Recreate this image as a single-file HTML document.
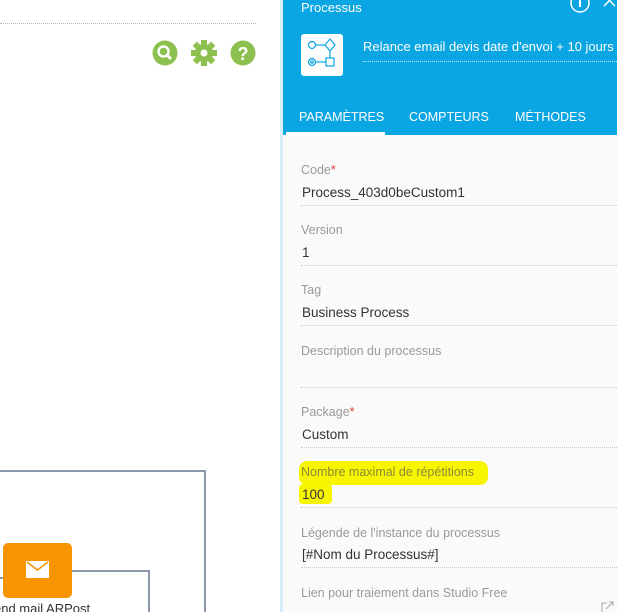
<!DOCTYPE html>
<html><head><meta charset="utf-8"><style>
html,body{margin:0;width:617px;height:612px;overflow:hidden}
body{background:#fff;font-family:"Liberation Sans",sans-serif;position:relative}
.a{position:absolute}
.lbl{position:absolute;left:301px;font-size:12.5px;color:#9a9a9a}
.val{position:absolute;left:302px;font-size:13.5px;color:#333}
.ln{position:absolute;left:301px;right:0;border-top:1px dotted #c8c8c8}
.star{color:#e04040}
</style></head><body>
<div class="a" style="left:0;top:23px;width:256px;border-top:1px dotted #b8b8b8"></div>
<svg class="a" style="left:152px;top:40px" width="105" height="28">
<circle cx="13" cy="13" r="12.5" fill="#8dc14f"/><circle cx="11.5" cy="11.5" r="5" fill="none" stroke="#fff" stroke-width="2.4"/><line x1="15" y1="15" x2="19" y2="19" stroke="#fff" stroke-width="2.8"/>
<g transform="translate(52,13)" fill="#8dc14f"><circle r="9"/><rect x="-3" y="-13" width="6" height="26"/><rect x="-13" y="-3" width="26" height="6"/><rect x="-3" y="-13" width="6" height="26" transform="rotate(45)"/><rect x="-3" y="-13" width="6" height="26" transform="rotate(-45)"/><circle r="3.5" fill="#fff"/></g>
<circle cx="91" cy="13" r="12.5" fill="#8dc14f"/><text x="91" y="20" font-size="18" font-weight="bold" fill="#fff" text-anchor="middle" font-family="Liberation Sans">?</text>
</svg>
<div class="a" style="left:-5px;top:470px;width:207px;height:160px;border:2px solid #8a96aa"></div>
<div class="a" style="left:70px;top:570px;width:78px;height:60px;border-top:2px solid #8a96aa;border-right:2px solid #8a96aa"></div>
<div class="a" style="left:0;top:577px;width:3px;border-top:2px solid #8a96aa"></div>
<div class="a" style="left:3px;top:543px;width:69px;height:55px;background:#f79400;border-radius:5px"></div>
<svg class="a" style="left:26px;top:561px" width="24" height="18"><rect x="0" y="0" width="23" height="17" fill="#fff"/><path d="M1 1 L11.5 9 L22 1" fill="none" stroke="#f79400" stroke-width="1.5"/></svg>
<div class="a" style="left:-6px;top:601px;font-size:13px;color:#333">end mail ARPost</div>
<div class="a" style="left:280px;top:0;width:3px;height:612px;background:#d6eef8"></div>
<div class="a" style="left:283px;top:0;width:334px;height:612px;background:#fafafa"></div>
<div class="a" style="left:283px;top:0;width:334px;height:135px;background:#0aa5e3"></div>
<div class="a" style="left:301px;top:0;color:#fff;font-size:13px">Processus</div>
<svg class="a" style="left:569px;top:-5px" width="48" height="22"><circle cx="11" cy="8" r="9" fill="none" stroke="#fff" stroke-width="1.5"/><line x1="11" y1="5" x2="11" y2="12" stroke="#fff" stroke-width="2"/><line x1="35" y1="0" x2="46" y2="11" stroke="#fff" stroke-width="1.5"/><line x1="46" y1="0" x2="35" y2="11" stroke="#fff" stroke-width="1.5"/></svg>
<div class="a" style="left:301px;top:34px;width:42px;height:42px;background:#fff;border-radius:3px"></div>
<svg class="a" style="left:301px;top:34px" width="42" height="42" fill="none" stroke="#0aa5e3" stroke-width="1.2"><circle cx="11" cy="11" r="3.5"/><line x1="14.5" y1="11" x2="24" y2="11"/><path d="M29 5 L34 11 L29 17 L24 11Z"/><line x1="29" y1="17" x2="29" y2="24"/><rect x="25" y="24" width="8" height="8"/><line x1="25" y1="28" x2="15" y2="28"/><circle cx="11" cy="28" r="3.5"/><circle cx="11" cy="28" r="1.3"/></svg>
<div class="a" style="left:363px;top:39px;color:#fff;font-size:13px">Relance email devis date d'envoi + 10 jours</div>
<div class="a" style="left:363px;top:61px;right:0;border-top:1px dotted #bfe6f7"></div>
<div class="a" style="left:299px;top:110px;color:#fff;font-size:12.5px">PARAMÈTRES</div>
<div class="a" style="left:409px;top:110px;color:#fff;font-size:12.5px">COMPTEURS</div>
<div class="a" style="left:515px;top:110px;color:#fff;font-size:12.5px">MÉTHODES</div>
<div class="a" style="left:286px;top:132px;width:99px;height:3px;background:#fff"></div>
<div class="lbl" style="top:163px">Code<span class="star">*</span></div>
<div class="val" style="top:185px">Process_403d0beCustom1</div>
<div class="ln" style="top:205px"></div>
<div class="lbl" style="top:223px">Version</div>
<div class="val" style="top:245px">1</div>
<div class="ln" style="top:265px"></div>
<div class="lbl" style="top:283px">Tag</div>
<div class="val" style="top:305px">Business Process</div>
<div class="ln" style="top:325px"></div>
<div class="lbl" style="top:344px">Description du processus</div>
<div class="ln" style="top:387px"></div>
<div class="lbl" style="top:405px">Package<span class="star">*</span></div>
<div class="val" style="top:427px">Custom</div>
<div class="ln" style="top:447px"></div>
<div class="a" style="left:299px;top:461px;width:189px;height:24px;background:#f8f500;border-radius:8px"></div>
<div class="a" style="left:299px;top:484px;width:33px;height:20px;background:#f8f500;border-radius:4px"></div>
<div class="lbl" style="top:465px;color:#8a8a3a">Nombre maximal de répétitions</div>
<div class="val" style="top:487px">100</div>
<div class="ln" style="top:507px"></div>
<div class="lbl" style="top:526px">Légende de l'instance du processus</div>
<div class="val" style="top:547px">[#Nom du Processus#]</div>
<div class="ln" style="top:567px"></div>
<div class="lbl" style="top:586px">Lien pour traiement dans Studio Free</div>
<svg class="a" style="left:601px;top:601px" width="16" height="11" fill="none" stroke="#aaa"><path d="M1 11 V2 H6 M5 8 L12 1 M8 1 H12 V5"/></svg>
</body></html>
